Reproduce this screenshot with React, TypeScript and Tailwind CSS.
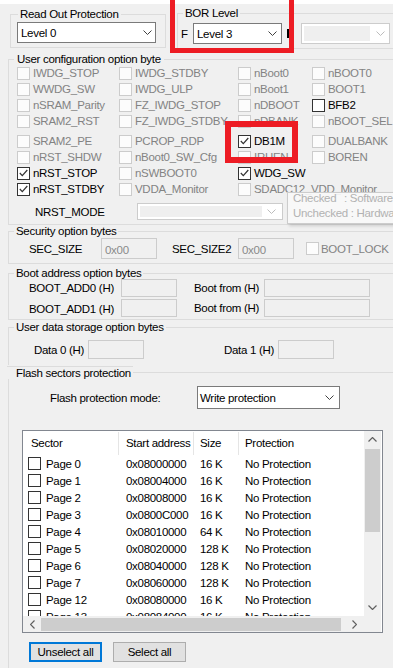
import React from "react";

type Item = { label: string; checked?: boolean; enabled?: boolean } | null;

const FONT = "font-['Liberation_Sans',Arial,sans-serif]";

function Down({ disabled }: { disabled?: boolean }) {
  return (
    <svg width="9" height="5" viewBox="0 0 9 5" className="shrink-0">
      <polyline points="0.5,0.5 4.5,4.5 8.5,0.5" fill="none" stroke={disabled ? "#bcbcbc" : "#404040"} strokeWidth="1" />
    </svg>
  );
}
function Up() {
  return (
    <svg width="9" height="5" viewBox="0 0 9 5" className="shrink-0">
      <polyline points="0.5,4.5 4.5,0.5 8.5,4.5" fill="none" stroke="#606060" strokeWidth="1.2" />
    </svg>
  );
}
function SDown() {
  return (
    <svg width="9" height="5" viewBox="0 0 9 5" className="shrink-0">
      <polyline points="0.5,0.5 4.5,4.5 8.5,0.5" fill="none" stroke="#606060" strokeWidth="1.2" />
    </svg>
  );
}
function Left() {
  return (
    <svg width="5" height="9" viewBox="0 0 5 9" className="shrink-0">
      <polyline points="4.5,0.5 0.5,4.5 4.5,8.5" fill="none" stroke="#606060" strokeWidth="1.2" />
    </svg>
  );
}
function Right() {
  return (
    <svg width="5" height="9" viewBox="0 0 5 9" className="shrink-0">
      <polyline points="0.5,0.5 4.5,4.5 0.5,8.5" fill="none" stroke="#606060" strokeWidth="1.2" />
    </svg>
  );
}

function Check({ checked, enabled }: { checked?: boolean; enabled?: boolean }) {
  const on = enabled || checked;
  return (
    <span
      className={`flex h-[13px] w-[13px] shrink-0 items-center justify-center border ${
        on ? "border-[#333333] bg-white" : "border-[#cccccc] bg-[#fcfcfc]"
      }`}
    >
      {checked && (
        <svg width="9" height="8" viewBox="0 0 9 8">
          <polyline points="0.8,4 3.3,6.6 8.3,1" fill="none" stroke="#333333" strokeWidth="1.2" />
        </svg>
      )}
    </span>
  );
}

function CB({ item }: { item: Item }) {
  if (!item) return <div className="h-[16px]" />;
  const on = item.enabled || item.checked;
  return (
    <div className="flex h-[16px] items-center gap-[3px] whitespace-nowrap">
      <Check checked={item.checked} enabled={item.enabled} />
      <span className={on ? "text-black" : "text-[#838383]"}>{item.label}</span>
    </div>
  );
}

const d = (label: string): Item => ({ label });

const rowsA: Item[][] = [
  [d("IWDG_STOP"), d("IWDG_STDBY"), d("nBoot0"), d("nBOOT0")],
  [d("WWDG_SW"), d("IWDG_ULP"), d("nBoot1"), d("BOOT1")],
  [d("nSRAM_Parity"), d("FZ_IWDG_STOP"), d("nDBOOT"), { label: "BFB2", enabled: true }],
  [d("SRAM2_RST"), d("FZ_IWDG_STDBY"), d("nDBANK"), d("nBOOT_SEL")],
];
const rowsB: Item[][] = [
  [d("SRAM2_PE"), d("PCROP_RDP"), { label: "DB1M", checked: true }, d("DUALBANK")],
  [d("nRST_SHDW"), d("nBoot0_SW_Cfg"), d("IRHEN"), d("BOREN")],
  [{ label: "nRST_STOP", checked: true }, d("nSWBOOT0"), { label: "WDG_SW", checked: true }, null],
  [{ label: "nRST_STDBY", checked: true }, d("VDDA_Monitor"), d("SDADC12_VDD_Monitor"), null],
];

const pages: string[][] = [
  ["Page 0", "0x08000000", "16 K"],
  ["Page 1", "0x08004000", "16 K"],
  ["Page 2", "0x08008000", "16 K"],
  ["Page 3", "0x0800C000", "16 K"],
  ["Page 4", "0x08010000", "64 K"],
  ["Page 5", "0x08020000", "128 K"],
  ["Page 6", "0x08040000", "128 K"],
  ["Page 7", "0x08060000", "128 K"],
  ["Page 12", "0x08080000", "16 K"],
  ["Page 13", "0x08084000", "16 K"],
];

const legend = "px-[2px] leading-[12px] whitespace-nowrap";
const box = "w-[420px] shrink-0 border border-[#dcdcdc]";
const field = "flex items-center border border-[#cccccc] bg-[#f0f0f0] pl-[3px] text-[#8a8a8a]";

export default function App() {
  return (
    <div
      className={`relative h-[668px] w-[393px] overflow-hidden bg-[#f0f0f0] text-[11.5px] leading-[14px] tracking-[-0.3px] text-black ${FONT}`}
    >
      <div className="h-[4px] bg-white" />

      {/* Top row */}
      <div className="flex items-start">
        <fieldset className="ml-[10px] mt-[4px] w-[156px] shrink-0 border border-[#dcdcdc] pb-[4px] pl-[6px]">
          <legend className={`ml-[1px] ${legend}`}>Read Out Protection</legend>
          <div className="mt-[2px] flex h-[21px] w-[139px] items-center justify-between border border-[#7a7a7a] bg-white pl-[3px] pr-[3px]">
            <span>Level 0</span>
            <Down />
          </div>
        </fieldset>
        <fieldset className="ml-[11px] mt-[3px] w-[240px] shrink-0 border border-[#dcdcdc] pb-[4px] pl-[3px]">
          <legend className={`ml-[2px] ${legend}`}>BOR Level</legend>
          <div className="mt-[4px] flex h-[21px] items-center">
            <span className="w-[12px]">F</span>
            <div className="flex h-[21px] w-[89px] items-center justify-between border border-[#7a7a7a] bg-white pl-[3px] pr-[4px]">
              <span>Level 3</span>
              <Down />
            </div>
            <span className="ml-[5px] h-[9px] w-[2px] bg-black" />
            <div className="ml-[12px] flex h-[21px] w-[89px] items-center border border-[#cccccc] bg-white p-[2px] pr-[4px]">
              <div className="h-full w-[66px] bg-[#efefef]" />
              <span className="ml-auto">
                <Down disabled />
              </span>
            </div>
          </div>
        </fieldset>
      </div>

      {/* User configuration option byte */}
      <fieldset className={`ml-[8px] mt-[4px] pb-[4px] pl-[8px] ${box}`}>
        <legend className="ml-[-3px] whitespace-nowrap px-[3px] leading-[12px]">User configuration option byte</legend>
        <div className="grid grid-cols-[102px_119px_74px_1fr]">
          {rowsA.flat().map((it, i) => (
            <CB key={i} item={it} />
          ))}
        </div>
        <div className="mt-[4px] grid grid-cols-[102px_119px_74px_1fr]">
          {rowsB.flat().map((it, i) => (
            <CB key={i} item={it} />
          ))}
        </div>
        <div className="mt-[6px] flex h-[17px] items-center">
          <span className="w-[120px] pl-[18px]">NRST_MODE</span>
          <div className="flex h-[17px] w-[146px] items-center border border-[#cccccc] bg-white p-[2px] pr-[6px]">
            <div className="h-full w-[122px] bg-[#efefef]" />
            <span className="ml-auto">
              <Down disabled />
            </span>
          </div>
        </div>
      </fieldset>

      {/* Security option bytes */}
      <fieldset className={`ml-[8px] pb-[4px] pl-[5px] ${box}`}>
        <legend className={legend}>Security option bytes</legend>
        <div className="mt-[1px] flex h-[21px] items-center pl-[15px]">
          <span className="w-[72px]">SEC_SIZE</span>
          <div className={`h-[21px] w-[56px] pt-[2px] ${field}`}>0x00</div>
          <span className="ml-[15px] w-[66px]">SEC_SIZE2</span>
          <div className={`h-[21px] w-[56px] pt-[2px] ${field}`}>0x00</div>
          <div className="ml-[12px] flex items-center gap-[2px]">
            <Check />
            <span className="text-[#838383]">BOOT_LOCK</span>
          </div>
        </div>
      </fieldset>

      {/* Boot address option bytes */}
      <fieldset className={`ml-[8px] mt-[3px] pb-[2px] pl-[5px] ${box}`}>
        <legend className={legend}>Boot address option bytes</legend>
        <div className="flex h-[18px] items-center pl-[15px]">
          <span className="w-[92px]">BOOT_ADD0 (H)</span>
          <div className={`h-[18px] w-[56px] ${field}`} />
          <span className="ml-[17px] w-[70px]">Boot from (H)</span>
          <div className={`h-[18px] w-[106px] ${field}`} />
        </div>
        <div className="mt-[2px] flex h-[18px] items-center pl-[15px]">
          <span className="w-[92px] pt-[2px]">BOOT_ADD1 (H)</span>
          <div className={`h-[18px] w-[56px] ${field}`} />
          <span className="ml-[17px] w-[70px]">Boot from (H)</span>
          <div className={`h-[18px] w-[106px] ${field}`} />
        </div>
      </fieldset>

      {/* User data storage option bytes */}
      <fieldset className={`ml-[8px] mt-[1px] border-b-0 pb-[6px] pl-[5px] ${box}`}>
        <legend className={legend}>User data storage option bytes</legend>
        <div className="mt-[7px] flex h-[19px] items-center pl-[20px]">
          <span className="w-[54px]">Data 0 (H)</span>
          <div className={`h-[19px] w-[56px] ${field}`} />
          <span className="ml-[80px] w-[54px]">Data 1 (H)</span>
          <div className={`h-[19px] w-[56px] ${field}`} />
        </div>
      </fieldset>

      {/* Flash sectors protection */}
      <fieldset className={`ml-[8px] mt-[1px] h-[320px] pl-[5px] ${box}`}>
        <legend className="ml-[-7px] whitespace-nowrap border-t border-[#dcdcdc] pl-[9px] pr-[2px] leading-[12px]">
          Flash sectors protection
        </legend>
        <div className="mt-[7px] flex h-[23px] items-center pl-[36px]">
          <span className="w-[147px]">Flash protection mode:</span>
          <div className="flex h-[23px] w-[143px] items-center justify-between border border-[#7a7a7a] bg-white pl-[2px] pr-[5px]">
            <span>Write protection</span>
            <Down />
          </div>
        </div>

        <div className="ml-[8px] mt-[21px] flex h-[203px] w-[361px] flex-col border border-[#828790] bg-white">
          <div className="flex h-[185px]">
            <div className="flex w-[341px] flex-col overflow-hidden">
              <div className="flex h-[24px] shrink-0 items-center whitespace-nowrap">
                <div className="flex h-[23px] w-[96px] items-center border-r border-[#e5e5e5] pl-[8px]">Sector</div>
                <div className="flex h-[23px] w-[75px] items-center border-r border-[#e5e5e5] pl-[7px]">Start address</div>
                <div className="flex h-[23px] w-[45px] items-center border-r border-[#e5e5e5] pl-[6px]">Size</div>
                <div className="pl-[6px]">Protection</div>
              </div>
              {pages.map((p) => (
                <div key={p[0]} className="flex h-[17px] shrink-0 items-center whitespace-nowrap">
                  <div className="flex w-[96px] items-center gap-[5px] pl-[5px]">
                    <Check enabled />
                    <span>{p[0]}</span>
                  </div>
                  <div className="w-[75px] pl-[7px]">{p[1]}</div>
                  <div className="w-[45px] pl-[6px]">{p[2]}</div>
                  <div className="pl-[6px]">No Protection</div>
                </div>
              ))}
            </div>
            <div className="flex w-[17px] flex-col items-center bg-[#f0f0f0]">
              <div className="flex h-[17px] items-center justify-center">
                <Up />
              </div>
              <div className="mt-[1px] h-[83px] w-[15px] bg-[#cdcdcd]" />
              <div className="flex-1" />
              <div className="flex h-[17px] items-center justify-center">
                <SDown />
              </div>
            </div>
          </div>
          <div className="flex h-[16px]">
            <div className="flex w-[341px] items-center bg-[#f0f0f0]">
              <div className="flex w-[18px] justify-center">
                <Left />
              </div>
              <div className="h-[13px] w-[300px] bg-[#cdcdcd]" />
              <div className="flex flex-1 justify-end pr-[7px]">
                <Right />
              </div>
            </div>
            <div className="w-[17px] bg-[#f0f0f0]" />
          </div>
        </div>

        <div className="ml-[15px] mt-[9px] flex gap-[11px]">
          <button className="flex h-[20px] w-[73px] items-center justify-center border-2 border-[#0078d7] bg-[#e1e1e1]">
            Unselect all
          </button>
          <button className="flex h-[20px] w-[73px] items-center justify-center border border-[#adadad] bg-[#e1e1e1]">
            Select all
          </button>
        </div>
      </fieldset>

      {/* Tooltip overlay */}
      <div className="absolute left-[287px] top-[192px] h-[32px] w-[120px] whitespace-nowrap border border-[#cccccc] bg-[#f8f8f8]/90 pl-[5px] leading-[15px] text-[#b2b2b2] shadow-[2px_2px_3px_rgba(0,0,0,0.15)]">
        <div className="mt-[-2px]">
          <span className="inline-block w-[51px]">Checked</span>: Software
        </div>
        <div>Unchecked : Hardware</div>
      </div>

      {/* Red highlight boxes */}
      <div className="absolute left-[170px] top-[-5px] h-[58px] w-[124px] border-[5px] border-[#ed1c24]" />
      <div className="absolute left-[225px] top-[121px] h-[42px] w-[73px] border-[6px] border-[#ed1c24]" />
    </div>
  );
}
